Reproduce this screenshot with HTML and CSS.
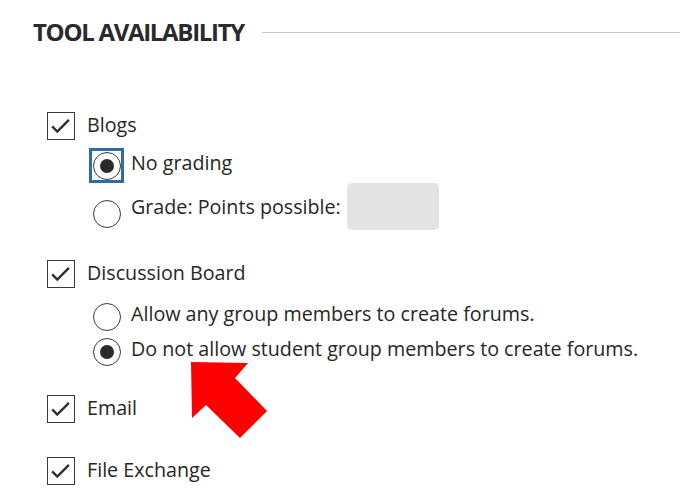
FILE: index.html
```html
<!DOCTYPE html>
<html lang="en">
<head>
<meta charset="utf-8">
<title>Tool Availability</title>
<link rel="stylesheet" href="styles.css">
</head>
<body>
<div class="page">
  <div class="header">
    <h2 class="title">TOOL AVAILABILITY</h2>
    <div class="rule"></div>
  </div>
  <div class="tools">
    <div class="tool tool-blogs">
      <div class="check-row">
        <span class="checkbox"><svg viewBox="0 0 28 28" width="26" height="26"><polyline points="4.5,14.5 10,20 22.5,7.5" fill="none" stroke="#2e2e2e" stroke-width="2.6"/></svg></span>
        <span class="label">Blogs</span>
      </div>
      <div class="options opts-blogs">
        <div class="opt-row">
          <span class="ring focus"><span class="radio checked"></span></span>
          <span class="label">No grading</span>
        </div>
        <div class="opt-row grade-row">
          <span class="ring"><span class="radio"></span></span>
          <span class="label">Grade: Points possible:</span>
          <span class="points"></span>
        </div>
      </div>
    </div>
    <div class="tool tool-discussion">
      <div class="check-row">
        <span class="checkbox"><svg viewBox="0 0 28 28" width="26" height="26"><polyline points="4.5,14.5 10,20 22.5,7.5" fill="none" stroke="#2e2e2e" stroke-width="2.6"/></svg></span>
        <span class="label">Discussion Board</span>
      </div>
      <div class="options opts-discussion">
        <div class="opt-row">
          <span class="ring"><span class="radio"></span></span>
          <span class="label">Allow any group members to create forums.</span>
        </div>
        <div class="opt-row">
          <span class="ring"><span class="radio checked"></span></span>
          <span class="label">Do not allow student group members to create forums.</span>
        </div>
      </div>
    </div>
    <div class="tool tool-email">
      <div class="check-row">
        <span class="checkbox"><svg viewBox="0 0 28 28" width="26" height="26"><polyline points="4.5,14.5 10,20 22.5,7.5" fill="none" stroke="#2e2e2e" stroke-width="2.6"/></svg></span>
        <span class="label">Email</span>
      </div>
    </div>
    <div class="tool tool-file">
      <div class="check-row">
        <span class="checkbox"><svg viewBox="0 0 28 28" width="26" height="26"><polyline points="4.5,14.5 10,20 22.5,7.5" fill="none" stroke="#2e2e2e" stroke-width="2.6"/></svg></span>
        <span class="label">File Exchange</span>
      </div>
    </div>
  </div>
  <svg class="arrow" width="680" height="493" viewBox="0 0 680 493">
    <polygon points="191,362 248,363 235,378 267,411 240,438 206,405 192,418" fill="#ff0000"/>
  </svg>
</div>
</body>
</html>
```

FILE: styles.css
```css
html, body {
  margin: 0;
  padding: 0;
  background: #ffffff;
}
body {
  font-family: "Open Sans", "Liberation Sans", sans-serif;
  color: #262626;
  width: 680px;
  height: 493px;
  overflow: hidden;
}
.page {
  position: relative;
  padding-left: 33px;
  height: 493px;
  box-sizing: border-box;
}
.header {
  height: 64px;
  display: flex;
  align-items: center;
  gap: 18px;
}
.title {
  margin: 0;
  font-size: 24px;
  font-weight: 700;
  letter-spacing: -1.3px;
  color: #2a2a2e;
  line-height: 1;
}
.rule {
  flex: 1;
  height: 1px;
  background: #c9c9c9;
}
.tools {
  margin-top: 48px;
  padding-left: 14px;
  display: flex;
  flex-direction: column;
}
.tool-discussion { margin-top: 30px; }
.tool-email { margin-top: 26px; }
.tool-file { margin-top: 34px; }
.check-row {
  display: flex;
  align-items: center;
  gap: 12px;
  height: 28px;
}
.checkbox {
  width: 28px;
  height: 28px;
  box-sizing: border-box;
  border: 1.5px solid #3a3a3a;
  display: flex;
  align-items: center;
  justify-content: center;
  background: #fff;
}
.label {
  font-size: 19.7px;
  line-height: 28px;
  white-space: nowrap;
}
.check-row .label {
  padding-bottom: 2px;
}
.opt-row .label {
  padding-bottom: 6px;
}
.options {
  padding-left: 42px;
  display: flex;
  flex-direction: column;
}
.opts-blogs { padding-top: 8px; }
.opts-discussion { padding-top: 11px; }
.opt-row {
  display: flex;
  align-items: center;
  height: 35px;
}
.grade-row {
  height: 47px;
}
.grade-row .ring {
  margin-top: 14px;
}
.grade-row .label {
  padding-bottom: 0;
}
.ring {
  width: 35px;
  height: 35px;
  box-sizing: border-box;
  border: 3px solid transparent;
  display: flex;
  align-items: center;
  justify-content: center;
  margin-right: 7px;
  flex: none;
}
.ring.focus {
  border-color: #2b6ea6;
}
.radio {
  width: 28px;
  height: 28px;
  box-sizing: border-box;
  border: 1.5px solid #3a3a3a;
  border-radius: 50%;
  display: flex;
  align-items: center;
  justify-content: center;
  background: #fff;
}
.radio.checked::after {
  content: "";
  width: 14px;
  height: 14px;
  border-radius: 50%;
  background: #2b2b2b;
}
.points {
  width: 92px;
  height: 47px;
  margin-left: 6px;
  background: #e4e4e4;
  border-radius: 5px;
}
.arrow {
  position: absolute;
  left: 0;
  top: 0;
  pointer-events: none;
}
```
